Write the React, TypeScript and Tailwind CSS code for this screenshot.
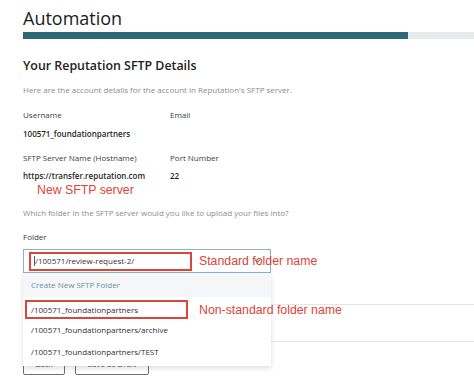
export default function App() {
  return (
    <div className="w-[474px] h-[388px] overflow-hidden bg-white pt-[5px] font-['Open_Sans',sans-serif] text-[#2a2a2a]">
      {/* Header */}
      <h1 className="pl-[23px] text-[18px] leading-[26px] text-[#1c1c1c]">Automation</h1>
      <div className="flex h-[7px] mt-[1px] pl-[23px]">
        <div className="w-[385px] bg-[#2f6678]" />
        <div className="flex-1 bg-[#e8ebee]" />
      </div>

      <div className="px-[23px]">
        <h2 className="mt-[18px] text-[12.4px] leading-[18px] font-semibold text-[#222]">Your Reputation SFTP Details</h2>
        <p className="mt-[9px] text-[8px] leading-[12px] text-[#8c8c8c]">
          Here are the account details for the account in Reputation's SFTP server.
        </p>

        {/* Account details */}
        <div className="mt-[13px] grid grid-cols-[147px_1fr] text-[8px] leading-[12px]">
          <span className="text-[#3d3d3d]">Username</span>
          <span className="text-[#3d3d3d]">Email</span>
          <span className="mt-[7px] font-semibold text-[#1f1f1f]">100571_foundationpartners</span>
          <span />
          <span className="mt-[12px] text-[#3d3d3d]">SFTP Server Name (Hostname)</span>
          <span className="mt-[12px] text-[#3d3d3d]">Port Number</span>
          <span className="mt-[6px] font-semibold text-[#1f1f1f]">https://transfer.reputation.com</span>
          <span className="mt-[6px] font-semibold text-[#1f1f1f]">22</span>
        </div>

        <p className="mt-[1px] ml-[14px] font-['Liberation_Sans',sans-serif] text-[12.3px] leading-[14px] text-[#dc4437]">
          New SFTP server
        </p>

        <p className="mt-[10px] text-[8px] leading-[12px] text-[#8c8c8c]">
          Which folder in the SFTP server would you like to upload your files into?
        </p>
        <p className="mt-[12px] text-[8px] leading-[12px] text-[#3d3d3d]">Folder</p>

        {/* Folder select with open menu */}
        <div className="relative mt-[6px] w-[248px]">
          <div className="flex h-[24px] items-center border border-[#8db3c1] bg-white">
            <div className="ml-[5px] flex h-[19px] w-[163px] items-center border-2 border-[#d9463a] pl-[3px]">
              <span className="h-[10px] w-px bg-[#555]" />
              <span className="text-[8px] text-[#333]">/100571/review-request-2/</span>
            </div>
            <svg className="ml-auto mr-[9px] h-[6px] w-[7px]" viewBox="0 0 8 6" fill="none">
              <path d="M1 1.5 4 4.5 7 1.5" stroke="#777" strokeWidth="1.2" />
            </svg>
          </div>

          <span className="absolute left-[176px] top-[5px] whitespace-nowrap font-['Liberation_Sans',sans-serif] text-[12.3px] leading-[14px] text-[#dc4437]">
            Standard folder name
          </span>

          <div className="absolute left-0 top-full z-10 w-[248px] bg-white pb-[3px] text-[8px] shadow-[0_2px_5px_rgba(0,0,0,0.14)]">
            <div className="flex h-[24px] items-center bg-[#f5f6f7] pl-[8px] text-[8px] font-medium text-[#6a93a3]">Create New SFTP Folder</div>
            <div className="flex h-[22px] items-start pt-[3px]">
              <div className="ml-[2px] flex h-[19px] w-[163px] items-center border-2 border-[#d9463a] pl-[4px] text-[#2f2f2f]">
                /100571_foundationpartners
              </div>
            </div>
            <div className="flex h-[22px] items-center pl-[8px] text-[#2f2f2f]">/100571_foundationpartners/archive</div>
            <div className="flex h-[22px] items-center pl-[8px] text-[#2f2f2f]">/100571_foundationpartners/TEST</div>
            <span className="absolute left-[176px] top-[30px] whitespace-nowrap font-['Liberation_Sans',sans-serif] text-[12.3px] leading-[14px] text-[#dc4437]">
              Non-standard folder name
            </span>
          </div>
        </div>

        {/* Content behind the menu */}
        <div className="mt-[31px] -mr-[23px] h-[38px] border-y border-[#e4e6e8]" />

        <div className="mt-[11px] flex gap-[10px] text-[8px] text-[#444]">
          <button className="h-[22px] w-[42px] rounded-[2px] border border-[#6f6f6f]">Back</button>
          <button className="h-[22px] w-[74px] rounded-[2px] border border-[#6f6f6f]">Save as Draft</button>
        </div>
      </div>
    </div>
  );
}
